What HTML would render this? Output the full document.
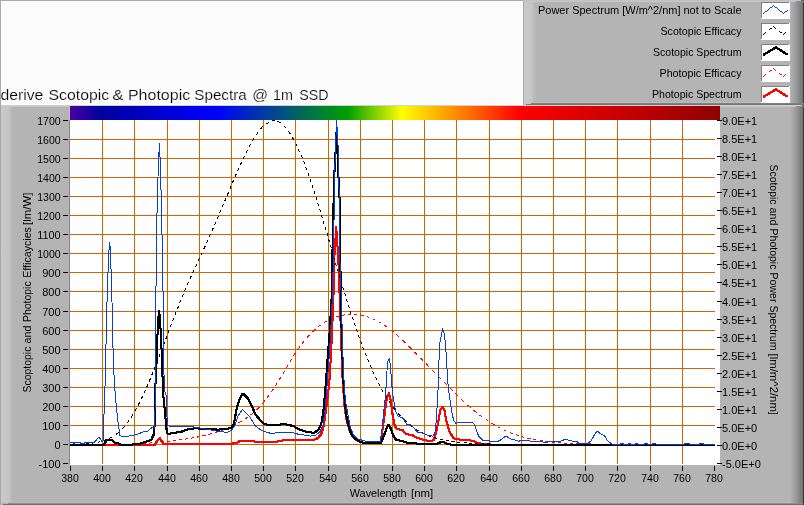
<!DOCTYPE html>
<html><head><meta charset="utf-8"><title>derive Scotopic &amp; Photopic Spectra</title>
<style>html,body{margin:0;padding:0;background:#fbfbfb;overflow:hidden}svg{display:block;font-family:"Liberation Sans", sans-serif;font-size:11px;fill:#000}svg{will-change:transform;opacity:0.999}.g line{stroke:#cc6600;stroke-width:1}.t line{stroke:#000;stroke-width:1}</style></head><body>
<svg width="804" height="505" viewBox="0 0 804 505">
<defs>
<linearGradient id="spec" x1="0" x2="1" y1="0" y2="0">
<stop offset="0.0000" stop-color="#4a00a0"/>
<stop offset="0.0492" stop-color="#0000a0"/>
<stop offset="0.2246" stop-color="#0000ff"/>
<stop offset="0.4277" stop-color="#00a000"/>
<stop offset="0.5108" stop-color="#ffff00"/>
<stop offset="0.6923" stop-color="#ff0000"/>
<stop offset="1.0000" stop-color="#900000"/>
</linearGradient>
<linearGradient id="lh" x1="0" x2="1"><stop offset="0" stop-color="#c9c9c9"/><stop offset="0.6" stop-color="#c6c6c6"/><stop offset="1" stop-color="#b4b4b4"/></linearGradient>
<linearGradient id="rs" x1="0" x2="1"><stop offset="0" stop-color="#b4b4b4"/><stop offset="0.45" stop-color="#989898"/><stop offset="0.9" stop-color="#747474"/><stop offset="0.93" stop-color="#3c3c3c"/><stop offset="1" stop-color="#343434"/></linearGradient>
<clipPath id="cp"><rect x="70" y="120" width="645" height="345"/></clipPath>
</defs>
<rect x="0" y="0" width="804" height="105" fill="#fbfbfb"/>
<rect x="0" y="0" width="524" height="1" fill="#aaaaaa"/>
<rect x="0" y="0" width="1" height="105" fill="#aaaaaa"/>
<rect x="523" y="0" width="281" height="105" fill="#b4b4b4"/>
<rect x="523" y="0" width="1" height="105" fill="#aaaaaa"/>
<rect x="524" y="0" width="12" height="105" fill="url(#lh)"/>
<rect x="523" y="0" width="278" height="1" fill="#c2c2c2"/>
<rect x="524" y="1" width="272" height="1" fill="#c6c6c6"/>
<rect x="790" y="2" width="14" height="103" fill="url(#rs)"/>
<rect x="796" y="1" width="8" height="1" fill="#8c8c8c"/><rect x="801" y="0" width="3" height="1" fill="#5a5a5a"/>
<rect x="531" y="102" width="260" height="1" fill="#bcbcbc"/>
<rect x="531" y="103" width="273" height="1" fill="#808080"/>
<rect x="526" y="104" width="278" height="1" fill="#747474"/>
<rect x="0" y="105" width="804" height="400" fill="#b4b4b4"/>
<rect x="0" y="105" width="1" height="400" fill="#a8a8a8"/>
<rect x="1" y="105" width="12" height="398" fill="url(#lh)"/>
<rect x="1" y="105" width="800" height="1" fill="#cdd3d3"/>
<rect x="2" y="106" width="794" height="1" fill="#c4c4c4"/>
<rect x="790" y="107" width="14" height="398" fill="url(#rs)"/>
<rect x="796" y="106" width="8" height="1" fill="#8c8c8c"/><rect x="802" y="105" width="2" height="1" fill="#5a5a5a"/>
<rect x="8" y="502" width="782" height="1" fill="#bababa"/>
<rect x="8" y="503" width="795" height="1" fill="#8e8e8e"/>
<rect x="3" y="504" width="800" height="1" fill="#707070"/>
<rect x="69" y="106" width="1" height="14" fill="#c2c2c2"/>
<rect x="69" y="120" width="1" height="344" fill="#858585"/>
<rect x="70" y="120" width="650" height="345" fill="#ffffff"/>
<rect x="70" y="106" width="650" height="14" fill="url(#spec)"/>
<g class="g" shape-rendering="crispEdges">
<line x1="102.5" y1="120" x2="102.5" y2="464"/>
<line x1="134.5" y1="120" x2="134.5" y2="464"/>
<line x1="167.5" y1="120" x2="167.5" y2="464"/>
<line x1="199.5" y1="120" x2="199.5" y2="464"/>
<line x1="231.5" y1="120" x2="231.5" y2="464"/>
<line x1="263.5" y1="120" x2="263.5" y2="464"/>
<line x1="295.5" y1="120" x2="295.5" y2="464"/>
<line x1="328.5" y1="120" x2="328.5" y2="464"/>
<line x1="360.5" y1="120" x2="360.5" y2="464"/>
<line x1="392.5" y1="120" x2="392.5" y2="464"/>
<line x1="424.5" y1="120" x2="424.5" y2="464"/>
<line x1="456.5" y1="120" x2="456.5" y2="464"/>
<line x1="489.5" y1="120" x2="489.5" y2="464"/>
<line x1="521.5" y1="120" x2="521.5" y2="464"/>
<line x1="553.5" y1="120" x2="553.5" y2="464"/>
<line x1="585.5" y1="120" x2="585.5" y2="464"/>
<line x1="617.5" y1="120" x2="617.5" y2="464"/>
<line x1="650.5" y1="120" x2="650.5" y2="464"/>
<line x1="682.5" y1="120" x2="682.5" y2="464"/>
<line x1="70" y1="444.5" x2="715" y2="444.5"/>
<line x1="70" y1="425.5" x2="715" y2="425.5"/>
<line x1="70" y1="406.5" x2="715" y2="406.5"/>
<line x1="70" y1="387.5" x2="715" y2="387.5"/>
<line x1="70" y1="368.5" x2="715" y2="368.5"/>
<line x1="70" y1="349.5" x2="715" y2="349.5"/>
<line x1="70" y1="330.5" x2="715" y2="330.5"/>
<line x1="70" y1="311.5" x2="715" y2="311.5"/>
<line x1="70" y1="291.5" x2="715" y2="291.5"/>
<line x1="70" y1="272.5" x2="715" y2="272.5"/>
<line x1="70" y1="253.5" x2="715" y2="253.5"/>
<line x1="70" y1="234.5" x2="715" y2="234.5"/>
<line x1="70" y1="215.5" x2="715" y2="215.5"/>
<line x1="70" y1="196.5" x2="715" y2="196.5"/>
<line x1="70" y1="177.5" x2="715" y2="177.5"/>
<line x1="70" y1="158.5" x2="715" y2="158.5"/>
<line x1="70" y1="139.5" x2="715" y2="139.5"/>
</g>
<g clip-path="url(#cp)">
<g fill="none" stroke="#ff0000" stroke-width="1" shape-rendering="crispEdges">
<polyline id="k1" transform="translate(-0.5,-0.5)" points="70.0,445.0 154.6,445.0 157.0,441.0 159.6,438.1 161.5,441.0 163.5,444.0 166.0,444.0 231.7,444.0 233.0,443.5 237.3,442.5 239.8,441.0 253.2,441.0 256.0,442.0 275.3,442.0 285.0,440.0 313.5,440.0 317.7,438.2 321.2,434.0 323.9,425.7 326.3,407.7 328.1,393.9 329.5,380.0 331.2,350.5 333.4,300.0 334.3,258.0 336.2,227.0 338.4,260.0 339.3,290.0 340.1,300.0 340.5,320.0 341.5,350.0 342.6,380.0 344.7,407.7 346.8,421.6 349.5,430.0 353.0,437.0 358.0,441.0 366.0,443.5 380.7,442.0 384.2,417.4 387.0,396.6 388.9,393.9 390.5,399.4 392.6,414.6 394.7,425.7 396.8,429.2 402.3,429.9 405.8,434.0 412.7,435.4 418.2,438.2 425.2,440.2 430.0,441.2 433.5,440.2 436.2,432.6 438.3,421.6 440.4,409.8 442.5,407.0 444.3,409.8 446.6,421.6 449.4,431.2 452.9,437.5 455.6,439.3 463.9,439.8 472.3,440.7 477.8,443.0 482.0,444.0 490.0,444.5 520.0,445.0 714.5,445.0"/>
<use href="#k1" x="1" y="0"/><use href="#k1" x="0" y="1"/><use href="#k1" x="1" y="1"/>
</g>
<path fill="none" stroke="#ff0000" stroke-width="1" shape-rendering="crispEdges" d="M70.5 444.4L73.7 444.4M76.7 444.4L79.7 444.4M82.7 444.4L85.7 444.4M88.7 444.4L91.7 444.4M94.7 444.4L97.6 444.4M100.6 444.4L103.6 444.4M106.6 444.4L109.6 444.4M112.6 444.3L115.6 444.3M118.6 444.3L121.6 444.2M124.5 444.2L127.5 444.1M130.5 444.0L133.5 444.0M136.5 443.8L139.5 443.7M142.7 443.5L145.7 443.3M148.7 443.1L151.7 442.9M154.7 442.6L157.7 442.4M160.7 442.1L163.7 441.8M166.6 441.5L169.6 441.2M172.6 440.8L175.6 440.5M178.6 440.1L181.6 439.7M184.6 439.3L187.6 438.8M190.6 438.3L193.6 437.7M196.5 437.2L199.5 436.6M202.5 435.9L205.5 435.2M208.5 434.5L211.7 433.6M214.7 432.8L217.7 431.8M220.7 430.7L223.7 429.7M226.7 428.4L229.7 427.1M232.7 425.8L235.6 424.3M238.6 422.8L241.6 421.1M244.6 419.2L247.6 417.4M250.6 414.9L253.6 412.5M256.6 409.8L259.6 406.7M262.3 403.8L265.0 400.7M267.1 397.8L269.2 394.8M271.4 391.9L273.4 388.9M275.5 385.7L277.4 382.7M279.3 379.7L281.1 376.7M282.9 373.7L284.6 370.7M286.4 367.8L288.1 364.8M289.9 361.9L291.8 358.8M293.6 355.9L295.5 352.7M297.5 349.8L299.8 346.7M302.0 343.8L304.4 340.7M307.0 337.8L309.6 334.9M312.5 331.8L315.5 329.3M318.4 326.7L321.4 324.5M324.4 322.6L327.4 320.7M330.4 319.3L333.4 318.0M336.4 316.8L339.4 316.1M342.4 315.3L345.4 314.8M348.3 314.6L351.3 314.3M354.3 314.4L357.3 314.7M360.3 314.9L363.5 315.8M366.5 316.6L369.5 317.5M372.5 318.8L375.5 320.1M378.5 321.7L381.5 323.5M384.5 325.3L387.4 327.5M390.4 329.7L393.4 332.0M396.4 334.6L399.4 337.2M402.4 339.9L405.4 342.8M408.4 345.7L411.4 348.7M414.4 351.7L417.3 354.7M420.3 357.8L423.1 360.6M426.1 363.7L428.8 366.6M431.8 369.7L434.8 372.8M437.6 375.6L440.6 378.7M443.6 381.7L446.6 384.7M449.5 387.7L452.5 390.6M455.5 393.5L458.5 396.4M461.5 399.3L464.5 402.2M467.5 404.9L470.5 407.6M473.5 410.3L476.5 412.6M479.4 414.9L482.4 417.1M485.7 419.3L488.6 421.3M491.6 423.2L494.6 424.9M497.6 426.7L500.6 428.2M503.6 429.7L506.6 431.1M509.6 432.3L512.6 433.5M515.6 434.6L518.5 435.6M521.5 436.6L524.5 437.4M527.5 438.1L530.5 438.9M533.5 439.5L536.5 440.1M539.5 440.6L542.5 441.0M545.5 441.4L548.4 441.7M551.4 442.0L554.6 442.3M557.6 442.6L560.6 442.8M563.6 443.0L566.6 443.2M569.6 443.4L572.6 443.5M575.6 443.6L578.6 443.7M581.6 443.8L584.6 443.9M587.5 443.9L590.5 444.0M593.5 444.1L596.5 444.1M599.5 444.1L602.5 444.2M605.5 444.2L608.5 444.2M611.5 444.3L614.5 444.3M617.4 444.3L620.4 444.3M623.6 444.3L626.6 444.3M629.6 444.4L632.6 444.4M635.6 444.4L638.6 444.4M641.6 444.4L644.6 444.4M647.6 444.4L650.6 444.4M653.6 444.4L656.5 444.4M659.5 444.4L662.5 444.4M665.5 444.4L668.5 444.4M671.5 444.4L674.5 444.4M677.5 444.4L680.5 444.4M683.5 444.4L686.4 444.4M689.4 444.4L692.7 444.4M695.6 444.4L698.6 444.4M701.6 444.4L704.6 444.4M707.6 444.4L710.6 444.4M713.6 444.4L714.5 444.4"/>
<g fill="none" stroke="#000000" stroke-width="1" shape-rendering="crispEdges">
<polyline id="k2" transform="translate(-0.5,-0.5)" points="70.0,445.0 103.8,445.0 107.0,439.6 111.4,439.6 114.2,442.4 117.4,442.9 120.5,444.8 124.0,445.0 132.0,444.6 140.0,443.7 151.2,439.8 154.0,434.0 155.0,420.0 155.2,390.0 156.4,367.0 157.8,326.0 159.0,310.5 160.0,318.0 160.8,334.5 161.4,345.0 163.0,390.0 163.5,397.0 166.9,433.0 168.0,434.0 182.6,431.4 185.9,429.7 193.8,428.4 202.7,428.6 208.9,428.8 217.2,429.6 226.2,429.2 231.3,427.8 233.8,424.0 237.2,406.3 239.6,399.4 242.1,393.9 243.5,394.2 247.6,398.0 250.4,402.9 255.2,413.9 260.1,420.2 264.3,424.0 269.8,425.4 275.3,425.4 283.0,424.0 289.2,425.0 294.0,426.4 298.3,429.2 308.0,432.4 314.2,432.6 318.4,429.9 321.2,424.3 323.2,413.2 324.6,398.0 325.9,382.0 327.8,355.6 329.5,333.7 331.5,300.0 332.1,270.0 332.5,250.0 333.2,215.0 333.9,190.0 334.4,173.0 335.2,160.0 336.3,133.0 337.9,160.0 338.5,177.0 340.2,212.0 340.4,240.0 340.4,258.0 340.8,305.0 341.3,320.0 342.1,347.0 343.3,380.0 344.7,400.8 346.1,414.6 348.2,424.3 350.9,433.3 355.1,438.9 360.6,442.0 366.2,443.4 380.7,443.4 383.5,436.8 387.0,427.1 388.6,425.0 390.4,427.8 393.2,435.4 396.0,439.6 401.6,441.0 407.2,442.6 415.5,443.4 426.5,444.4 434.9,444.4 439.0,443.0 441.8,441.6 444.6,442.6 447.3,444.0 451.5,444.6 470.0,445.0 714.5,445.0"/>
<use href="#k2" x="1" y="0"/><use href="#k2" x="0" y="1"/><use href="#k2" x="1" y="1"/>
</g>
<path fill="none" stroke="#000000" stroke-width="1" shape-rendering="crispEdges" d="M69.5 444.2L70.7 444.2M73.6 444.2L76.6 444.1M79.6 444.0L82.6 443.9M85.6 443.7L88.6 443.4M91.6 443.2L94.6 442.8M97.6 442.2L100.5 441.7M103.5 440.7L106.5 439.6M109.5 438.5L112.5 436.6M115.7 434.5L118.5 432.4M121.5 429.4L124.5 426.3M127.0 423.2L128.9 420.4M131.0 417.4L133.1 414.3M134.9 411.3L136.5 408.2M138.0 405.4L139.6 402.4M141.2 399.3L142.7 396.2M144.0 393.3L145.3 390.4M146.7 387.2L148.0 384.3M149.2 381.4L150.6 378.3M151.7 375.4L152.9 372.3M154.1 369.4L155.3 366.3M156.4 363.4L157.7 360.3M158.9 357.3L159.9 354.4M161.1 351.3L162.3 348.3M163.3 345.4L164.5 342.4M165.7 339.3L166.8 336.4M167.9 333.4L169.0 330.4M170.3 327.2L171.4 324.2M172.5 321.3L173.7 318.3M174.8 315.4L176.0 312.3M177.3 309.3L178.4 306.4M179.6 303.4L180.9 300.3M182.1 297.2L183.3 294.4M184.6 291.4L185.9 288.3M187.2 285.3L188.4 282.4M189.7 279.4L191.2 276.2M192.6 273.2L193.9 270.2M195.3 267.2L196.7 264.2M198.1 261.2L199.4 258.3M200.8 255.3L202.2 252.4M203.6 249.4L205.1 246.2M206.5 243.3L207.7 240.4M209.1 237.2L210.4 234.3M211.7 231.4L213.1 228.3M214.4 225.4L215.7 222.3M217.0 219.3L218.3 216.2M219.5 213.4L220.8 210.4M222.1 207.3L223.4 204.4M224.7 201.3L226.0 198.2M227.2 195.4L228.5 192.3M229.7 189.4L231.0 186.3M232.3 183.2L233.5 180.4M234.8 177.4L236.1 174.3M237.4 171.3L238.7 168.4M240.2 165.2L241.5 162.3M242.9 159.4L244.3 156.4M245.8 153.2L247.3 150.3M248.9 147.4L250.6 144.2M252.2 141.3L253.8 138.4M255.9 135.3L258.0 132.4M260.4 129.3L262.7 126.2M265.7 124.3L268.7 122.4M271.7 120.9L274.7 120.5M277.7 121.1L280.6 123.0M283.6 125.7L286.6 128.3M288.6 131.3L290.4 134.2M292.3 137.2L294.2 140.3M295.8 143.4L297.0 146.2M298.4 149.3L299.7 152.2M301.1 155.2L302.5 158.3M303.7 161.3L304.7 164.3M305.8 167.2L306.9 170.2M308.0 173.2L309.0 176.2M310.1 179.2L311.2 182.4M312.2 185.3L313.1 188.1M314.1 191.3L315.0 194.2M316.0 197.3L316.9 200.2M317.9 203.3L318.8 206.2M319.8 209.4L320.7 212.3M321.5 215.2L322.4 218.2M323.4 221.3L324.2 224.3M325.1 227.2L326.0 230.1M327.0 233.3L327.8 236.2M328.6 239.1L329.6 242.3M330.4 245.2L331.3 248.4M332.1 251.3L333.0 254.2M333.9 257.3L334.7 260.2M335.6 263.2L336.5 266.3M337.4 269.3L338.3 272.2M339.2 275.4L340.1 278.3M341.0 281.2L341.9 284.2M342.8 287.4L343.7 290.3M344.7 293.2L345.7 296.4M346.6 299.3L347.5 302.2M348.4 305.2L349.4 308.3M350.3 311.3L351.2 314.2M352.3 317.2L353.3 320.2M354.3 323.2L355.3 326.2M356.3 329.2L357.4 332.2M358.4 335.2L359.4 338.1M360.6 341.4L361.8 344.3M362.9 347.3L364.0 350.3M365.2 353.2L366.3 356.2M367.5 359.2L368.9 362.3M370.1 365.3L371.4 368.2M372.8 371.3L374.1 374.3M375.4 377.2L377.0 380.2M378.6 383.3L380.1 386.1M381.7 389.2L383.3 392.3M385.2 395.3L387.1 398.3M389.0 401.3L390.9 404.2M393.1 407.2L395.6 410.4M397.9 413.3L400.5 416.2M403.5 419.1L406.4 422.1M409.4 424.6L412.4 426.8M415.4 429.1L418.4 430.8M421.4 432.4L424.4 434.0M427.4 435.2L430.6 436.5M433.6 437.5L436.6 438.3M439.6 439.2L442.6 439.8M445.6 440.4L448.5 441.0M451.5 441.4L454.5 441.9M457.5 442.2L460.5 442.5M463.5 442.8L466.5 443.0M469.5 443.2L472.5 443.4M475.5 443.5L478.4 443.6M481.4 443.8L484.4 443.8M487.4 443.9L490.4 444.0M493.4 444.1L496.4 444.1M499.6 444.2L502.6 444.2M505.6 444.2L508.6 444.3M511.6 444.3L514.6 444.3M517.5 444.3L520.5 444.3M523.5 444.4L526.5 444.4M529.5 444.4L532.5 444.4M535.5 444.4L538.5 444.4M541.5 444.4L544.5 444.4M547.4 444.4L550.4 444.4M553.4 444.4L556.4 444.4M559.4 444.4L562.4 444.4M565.4 444.4L568.6 444.4M571.6 444.4L574.6 444.4M577.6 444.4L580.6 444.4M583.6 444.4L586.5 444.4M589.5 444.4L592.5 444.4M595.5 444.4L598.5 444.4M601.5 444.4L604.5 444.4M607.5 444.4L610.5 444.4M613.5 444.4L616.4 444.4M619.4 444.4L622.4 444.4M625.4 444.4L628.4 444.4M631.4 444.4L634.4 444.4M637.6 444.4L640.6 444.4M643.6 444.4L646.6 444.4M649.6 444.4L652.6 444.4M655.5 444.4L658.5 444.4M661.5 444.4L664.5 444.4M667.5 444.4L670.5 444.4M673.5 444.4L676.5 444.4M679.5 444.4L682.5 444.4M685.4 444.4L688.4 444.4M691.4 444.4L694.4 444.4M697.4 444.4L700.4 444.4M703.4 444.4L706.6 444.4M709.6 444.4L712.6 444.4"/>
<polyline fill="none" stroke="#0040dc" stroke-width="1" shape-rendering="crispEdges" points="70.0,442.5 73.0,442.5 73.0,443.5 74.5,443.5 74.5,442.5 80.0,442.5 80.0,443.5 84.0,443.5 84.0,442.5 94.3,442.5 99.0,437.0 101.8,441.3 103.4,441.0 103.6,425.0 104.8,394.0 105.7,360.0 106.5,320.0 107.5,285.0 108.8,253.0 109.6,242.0 110.4,250.0 111.2,275.0 112.0,302.0 112.9,345.0 114.2,380.0 115.8,400.8 117.9,421.6 120.0,435.4 123.4,437.0 135.9,434.7 145.6,431.2 148.0,431.0 152.5,427.0 154.2,427.0 155.0,410.0 155.4,390.0 155.5,289.0 156.5,283.0 156.6,230.0 157.6,188.0 158.7,158.0 159.5,143.0 160.1,159.0 161.2,196.0 162.2,243.0 162.6,280.0 163.6,308.0 164.1,390.0 166.0,395.0 167.4,425.2 168.5,426.0 190.4,426.4 202.7,428.4 215.8,431.0 227.5,432.4 231.7,429.9 234.5,426.4 237.9,416.0 242.5,409.4 249.7,416.7 254.6,425.0 258.0,428.2 263.6,431.2 270.5,433.3 274.6,433.3 276.7,432.4 292.0,432.4 297.5,434.0 310.8,436.1 315.6,435.4 319.8,432.0 323.2,424.3 325.3,407.7 326.7,391.0 327.4,380.0 329.3,355.0 331.3,320.0 332.6,290.0 333.4,255.0 334.1,215.0 334.7,177.0 335.3,150.0 336.2,131.0 336.6,119.0 337.2,131.0 338.3,150.0 338.9,177.0 339.3,215.0 339.7,255.0 341.4,300.0 342.6,347.0 344.0,380.0 345.4,400.8 348.2,416.0 350.2,427.1 353.7,435.4 357.9,438.9 364.8,441.0 373.1,441.9 380.0,441.6 381.4,435.4 382.8,421.6 384.2,407.7 385.6,393.9 386.5,380.0 387.5,361.5 389.3,359.2 390.2,364.3 392.3,390.0 393.3,398.0 395.4,410.5 398.2,416.7 402.3,417.4 406.5,424.0 411.3,425.0 417.5,432.0 423.8,433.3 427.9,435.4 432.8,436.1 434.9,432.6 436.2,421.6 437.6,398.0 438.3,385.0 439.0,360.2 440.1,340.8 442.6,329.4 444.3,333.9 445.6,344.9 447.0,368.5 448.4,390.0 449.0,392.5 451.5,410.5 453.6,420.2 455.6,423.2 464.6,422.2 467.4,422.9 472.3,422.2 474.3,424.3 477.1,432.6 479.2,436.8 482.6,440.2 488.2,440.4 490.3,441.3 497.8,441.3 500.5,440.0 504.6,436.9 507.4,436.9 511.5,439.4 517.0,440.4 519.0,441.3 521.0,440.1 527.9,440.1 530.0,441.0 540.2,441.0 543.0,442.1 547.7,442.1 549.1,441.0 553.9,441.0 555.9,442.1 558.0,441.0 561.4,441.0 564.8,439.4 566.9,439.4 568.9,440.4 571.7,441.0 576.4,441.0 579.1,443.5 588.0,443.5 591.4,440.4 595.5,432.8 597.6,431.2 601.0,434.2 604.4,435.6 607.8,441.0 611.3,443.5 613.0,444.5 620.0,444.5 620.5,443.5 623.6,443.5 624.0,444.5 628.4,444.5 628.6,443.5 630.0,443.5 630.4,444.5 635.0,444.5 635.3,443.5 637.8,443.5 638.2,444.5 644.0,444.5 644.3,443.5 647.6,443.5 648.0,444.5 652.3,444.5 652.6,443.5 655.8,443.5 656.2,444.5 684.3,444.5 684.6,443.5 689.7,443.5 690.0,444.5 699.1,444.5 699.4,443.5 703.6,443.5 704.0,444.5 714.5,444.5"/>
</g>
<g class="t" shape-rendering="crispEdges">
<line x1="63" y1="463.5" x2="68" y2="463.5"/>
<line x1="63" y1="444.5" x2="68" y2="444.5"/>
<line x1="63" y1="425.5" x2="68" y2="425.5"/>
<line x1="63" y1="406.5" x2="68" y2="406.5"/>
<line x1="63" y1="387.5" x2="68" y2="387.5"/>
<line x1="63" y1="368.5" x2="68" y2="368.5"/>
<line x1="63" y1="349.5" x2="68" y2="349.5"/>
<line x1="63" y1="330.5" x2="68" y2="330.5"/>
<line x1="63" y1="311.5" x2="68" y2="311.5"/>
<line x1="63" y1="291.5" x2="68" y2="291.5"/>
<line x1="63" y1="272.5" x2="68" y2="272.5"/>
<line x1="63" y1="253.5" x2="68" y2="253.5"/>
<line x1="63" y1="234.5" x2="68" y2="234.5"/>
<line x1="63" y1="215.5" x2="68" y2="215.5"/>
<line x1="63" y1="196.5" x2="68" y2="196.5"/>
<line x1="63" y1="177.5" x2="68" y2="177.5"/>
<line x1="63" y1="158.5" x2="68" y2="158.5"/>
<line x1="63" y1="139.5" x2="68" y2="139.5"/>
<line x1="63" y1="120.5" x2="68" y2="120.5"/>
<line x1="717" y1="463.5" x2="722" y2="463.5"/>
<line x1="717" y1="445.5" x2="722" y2="445.5"/>
<line x1="717" y1="427.5" x2="722" y2="427.5"/>
<line x1="717" y1="409.5" x2="722" y2="409.5"/>
<line x1="717" y1="391.5" x2="722" y2="391.5"/>
<line x1="717" y1="373.5" x2="722" y2="373.5"/>
<line x1="717" y1="355.5" x2="722" y2="355.5"/>
<line x1="717" y1="337.5" x2="722" y2="337.5"/>
<line x1="717" y1="319.5" x2="722" y2="319.5"/>
<line x1="717" y1="301.5" x2="722" y2="301.5"/>
<line x1="717" y1="282.5" x2="722" y2="282.5"/>
<line x1="717" y1="264.5" x2="722" y2="264.5"/>
<line x1="717" y1="246.5" x2="722" y2="246.5"/>
<line x1="717" y1="228.5" x2="722" y2="228.5"/>
<line x1="717" y1="210.5" x2="722" y2="210.5"/>
<line x1="717" y1="192.5" x2="722" y2="192.5"/>
<line x1="717" y1="174.5" x2="722" y2="174.5"/>
<line x1="717" y1="156.5" x2="722" y2="156.5"/>
<line x1="717" y1="138.5" x2="722" y2="138.5"/>
<line x1="717" y1="120.5" x2="722" y2="120.5"/>
<line x1="70.5" y1="466" x2="70.5" y2="471"/>
<line x1="102.5" y1="466" x2="102.5" y2="471"/>
<line x1="134.5" y1="466" x2="134.5" y2="471"/>
<line x1="167.5" y1="466" x2="167.5" y2="471"/>
<line x1="199.5" y1="466" x2="199.5" y2="471"/>
<line x1="231.5" y1="466" x2="231.5" y2="471"/>
<line x1="263.5" y1="466" x2="263.5" y2="471"/>
<line x1="295.5" y1="466" x2="295.5" y2="471"/>
<line x1="328.5" y1="466" x2="328.5" y2="471"/>
<line x1="360.5" y1="466" x2="360.5" y2="471"/>
<line x1="392.5" y1="466" x2="392.5" y2="471"/>
<line x1="424.5" y1="466" x2="424.5" y2="471"/>
<line x1="456.5" y1="466" x2="456.5" y2="471"/>
<line x1="489.5" y1="466" x2="489.5" y2="471"/>
<line x1="521.5" y1="466" x2="521.5" y2="471"/>
<line x1="553.5" y1="466" x2="553.5" y2="471"/>
<line x1="585.5" y1="466" x2="585.5" y2="471"/>
<line x1="617.5" y1="466" x2="617.5" y2="471"/>
<line x1="650.5" y1="466" x2="650.5" y2="471"/>
<line x1="682.5" y1="466" x2="682.5" y2="471"/>
<line x1="714.5" y1="466" x2="714.5" y2="471"/>
</g>
<g>
<text x="60.6" y="468.0" text-anchor="end">-100</text>
<text x="60.6" y="449.0" text-anchor="end">0</text>
<text x="60.6" y="430.0" text-anchor="end">100</text>
<text x="60.6" y="411.0" text-anchor="end">200</text>
<text x="60.6" y="392.0" text-anchor="end">300</text>
<text x="60.6" y="373.0" text-anchor="end">400</text>
<text x="60.6" y="354.0" text-anchor="end">500</text>
<text x="60.6" y="335.0" text-anchor="end">600</text>
<text x="60.6" y="316.0" text-anchor="end">700</text>
<text x="60.6" y="296.0" text-anchor="end">800</text>
<text x="60.6" y="277.0" text-anchor="end">900</text>
<text x="60.6" y="258.0" text-anchor="end" textLength="23.4" lengthAdjust="spacingAndGlyphs">1000</text>
<text x="60.6" y="239.0" text-anchor="end" textLength="23.4" lengthAdjust="spacingAndGlyphs">1100</text>
<text x="60.6" y="220.0" text-anchor="end" textLength="23.4" lengthAdjust="spacingAndGlyphs">1200</text>
<text x="60.6" y="201.0" text-anchor="end" textLength="23.4" lengthAdjust="spacingAndGlyphs">1300</text>
<text x="60.6" y="182.0" text-anchor="end" textLength="23.4" lengthAdjust="spacingAndGlyphs">1400</text>
<text x="60.6" y="163.0" text-anchor="end" textLength="23.4" lengthAdjust="spacingAndGlyphs">1500</text>
<text x="60.6" y="144.0" text-anchor="end" textLength="23.4" lengthAdjust="spacingAndGlyphs">1600</text>
<text x="60.6" y="125.0" text-anchor="end" textLength="23.4" lengthAdjust="spacingAndGlyphs">1700</text>
<text x="722" y="468.0">-5.0E+0</text>
<text x="722" y="450.0">0.0E+0</text>
<text x="722" y="432.0">5.0E+0</text>
<text x="722" y="414.0">1.0E+1</text>
<text x="722" y="396.0">1.5E+1</text>
<text x="722" y="378.0">2.0E+1</text>
<text x="722" y="360.0">2.5E+1</text>
<text x="722" y="342.0">3.0E+1</text>
<text x="722" y="324.0">3.5E+1</text>
<text x="722" y="306.0">4.0E+1</text>
<text x="722" y="287.0">4.5E+1</text>
<text x="722" y="269.0">5.0E+1</text>
<text x="722" y="251.0">5.5E+1</text>
<text x="722" y="233.0">6.0E+1</text>
<text x="722" y="215.0">6.5E+1</text>
<text x="722" y="197.0">7.0E+1</text>
<text x="722" y="179.0">7.5E+1</text>
<text x="722" y="161.0">8.0E+1</text>
<text x="722" y="143.0">8.5E+1</text>
<text x="722" y="125.0">9.0E+1</text>
<text x="70.0" y="482" text-anchor="middle" textLength="17.6" lengthAdjust="spacingAndGlyphs">380</text>
<text x="102.0" y="482" text-anchor="middle" textLength="17.6" lengthAdjust="spacingAndGlyphs">400</text>
<text x="134.0" y="482" text-anchor="middle" textLength="17.6" lengthAdjust="spacingAndGlyphs">420</text>
<text x="167.0" y="482" text-anchor="middle" textLength="17.6" lengthAdjust="spacingAndGlyphs">440</text>
<text x="199.0" y="482" text-anchor="middle" textLength="17.6" lengthAdjust="spacingAndGlyphs">460</text>
<text x="231.0" y="482" text-anchor="middle" textLength="17.6" lengthAdjust="spacingAndGlyphs">480</text>
<text x="263.0" y="482" text-anchor="middle" textLength="17.6" lengthAdjust="spacingAndGlyphs">500</text>
<text x="295.0" y="482" text-anchor="middle" textLength="17.6" lengthAdjust="spacingAndGlyphs">520</text>
<text x="328.0" y="482" text-anchor="middle" textLength="17.6" lengthAdjust="spacingAndGlyphs">540</text>
<text x="360.0" y="482" text-anchor="middle" textLength="17.6" lengthAdjust="spacingAndGlyphs">560</text>
<text x="392.0" y="482" text-anchor="middle" textLength="17.6" lengthAdjust="spacingAndGlyphs">580</text>
<text x="424.0" y="482" text-anchor="middle" textLength="17.6" lengthAdjust="spacingAndGlyphs">600</text>
<text x="456.0" y="482" text-anchor="middle" textLength="17.6" lengthAdjust="spacingAndGlyphs">620</text>
<text x="489.0" y="482" text-anchor="middle" textLength="17.6" lengthAdjust="spacingAndGlyphs">640</text>
<text x="521.0" y="482" text-anchor="middle" textLength="17.6" lengthAdjust="spacingAndGlyphs">660</text>
<text x="553.0" y="482" text-anchor="middle" textLength="17.6" lengthAdjust="spacingAndGlyphs">680</text>
<text x="585.0" y="482" text-anchor="middle" textLength="17.6" lengthAdjust="spacingAndGlyphs">700</text>
<text x="617.0" y="482" text-anchor="middle" textLength="17.6" lengthAdjust="spacingAndGlyphs">720</text>
<text x="650.0" y="482" text-anchor="middle" textLength="17.6" lengthAdjust="spacingAndGlyphs">740</text>
<text x="682.0" y="482" text-anchor="middle" textLength="17.6" lengthAdjust="spacingAndGlyphs">760</text>
<text x="714.0" y="482" text-anchor="middle" textLength="17.6" lengthAdjust="spacingAndGlyphs">780</text>
</g>
<text x="349.8" y="496.5" textLength="56.8" lengthAdjust="spacingAndGlyphs">Wavelength</text>
<text x="411.0" y="496.5" textLength="22.2" lengthAdjust="spacingAndGlyphs">[nm]</text>
<text transform="translate(31,392.4) rotate(-90)" textLength="45.8" lengthAdjust="spacingAndGlyphs">Scoptopic</text>
<text transform="translate(31,343.4) rotate(-90)" textLength="17.8" lengthAdjust="spacingAndGlyphs">and</text>
<text transform="translate(31,322.0) rotate(-90)" textLength="40.6" lengthAdjust="spacingAndGlyphs">Photopic</text>
<text transform="translate(31,277.8) rotate(-90)" textLength="50.7" lengthAdjust="spacingAndGlyphs">Efficaycies</text>
<text transform="translate(31,224.9) rotate(-90)" textLength="32.3" lengthAdjust="spacingAndGlyphs">[lm/W]</text>
<text transform="translate(770,164.6) rotate(90)" textLength="39.8" lengthAdjust="spacingAndGlyphs">Scotopic</text>
<text transform="translate(770,207.6) rotate(90)" textLength="17.8" lengthAdjust="spacingAndGlyphs">and</text>
<text transform="translate(770,228.6) rotate(90)" textLength="40.8" lengthAdjust="spacingAndGlyphs">Photopic</text>
<text transform="translate(770,272.6) rotate(90)" textLength="29.8" lengthAdjust="spacingAndGlyphs">Power</text>
<text transform="translate(770,305.4) rotate(90)" textLength="45.0" lengthAdjust="spacingAndGlyphs">Spectrum</text>
<text transform="translate(770,353.6) rotate(90)" textLength="61.4" lengthAdjust="spacingAndGlyphs">[lm/m^2/nm]</text>
<g font-size="15.5px" stroke="#fbfbfb" stroke-width="0.2" paint-order="fill stroke">
<text x="0.4" y="99.5" textLength="43.0" lengthAdjust="spacingAndGlyphs">derive</text>
<text x="48.5" y="99.5" textLength="60.7" lengthAdjust="spacingAndGlyphs">Scotopic</text>
<text x="112.2" y="99.5" textLength="11.3" lengthAdjust="spacingAndGlyphs">&amp;</text>
<text x="127.9" y="99.5" textLength="62.4" lengthAdjust="spacingAndGlyphs">Photopic</text>
<text x="194.3" y="99.5" textLength="52.4" lengthAdjust="spacingAndGlyphs">Spectra</text>
<text x="252.2" y="99.5" textLength="15.8" lengthAdjust="spacingAndGlyphs">@</text>
<text x="273.1" y="99.5" textLength="20.0" lengthAdjust="spacingAndGlyphs">1m</text>
<text x="299.2" y="99.5" textLength="29.4" lengthAdjust="spacingAndGlyphs">SSD</text>
</g>
<text x="741.5" y="14" text-anchor="end" textLength="203.5" lengthAdjust="spacingAndGlyphs">Power Spectrum [W/m^2/nm] not to Scale</text>
<rect x="761" y="2" width="29" height="17" fill="#ffffff"/>
<rect x="761" y="2" width="1" height="16" fill="#808080"/>
<rect x="761" y="2" width="28" height="1" fill="#808080"/>
<path fill="#0040dc" shape-rendering="crispEdges" d="M763 13h1v1h-1zM764 12h1v1h-1zM765 11h1v1h-1zM766 11h1v1h-1zM767 10h1v1h-1zM768 9h1v1h-1zM769 8h1v1h-1zM770 7h1v1h-1zM771 7h1v1h-1zM772 6h1v1h-1zM773 5h1v1h-1zM774 6h1v1h-1zM775 7h1v1h-1zM776 7h1v1h-1zM777 8h1v1h-1zM778 9h1v1h-1zM779 10h1v1h-1zM780 11h1v1h-1zM781 11h1v1h-1zM782 12h1v1h-1zM783 13h1v1h-1zM784 12h1v1h-1zM785 11h1v1h-1zM786 11h1v1h-1zM787 10h1v1h-1z"/>
<text x="741.5" y="35" text-anchor="end" textLength="81" lengthAdjust="spacingAndGlyphs">Scotopic Efficacy</text>
<rect x="761" y="23" width="29" height="17" fill="#ffffff"/>
<rect x="761" y="23" width="1" height="16" fill="#808080"/>
<rect x="761" y="23" width="28" height="1" fill="#808080"/>
<path fill="#000000" shape-rendering="crispEdges" d="M763 34h1v1h-1zM764 33h1v1h-1zM765 32h1v1h-1zM769 29h1v1h-1zM770 28h1v1h-1zM771 28h1v1h-1zM773 26h1v1h-1zM774 27h1v1h-1zM775 28h1v1h-1zM779 31h1v1h-1zM780 32h1v1h-1zM781 32h1v1h-1zM783 34h1v1h-1zM784 33h1v1h-1zM785 32h1v1h-1z"/>
<text x="741.5" y="56" text-anchor="end" textLength="88.5" lengthAdjust="spacingAndGlyphs">Scotopic Spectrum</text>
<rect x="761" y="44" width="29" height="17" fill="#ffffff"/>
<rect x="761" y="44" width="1" height="16" fill="#808080"/>
<rect x="761" y="44" width="28" height="1" fill="#808080"/>
<g fill="none" stroke="#000" stroke-width="1" shape-rendering="crispEdges">
<polyline id="k3" transform="translate(-0.5,-0.5)" points="763.2,55.0 776.0,47.4 788.0,55.0"/>
<use href="#k3" x="1" y="0"/><use href="#k3" x="0" y="1"/><use href="#k3" x="1" y="1"/>
</g>
<text x="741.5" y="77" text-anchor="end" textLength="82" lengthAdjust="spacingAndGlyphs">Photopic Efficacy</text>
<rect x="761" y="65" width="29" height="17" fill="#ffffff"/>
<rect x="761" y="65" width="1" height="16" fill="#808080"/>
<rect x="761" y="65" width="28" height="1" fill="#808080"/>
<path fill="#ff0000" shape-rendering="crispEdges" d="M763 76h1v1h-1zM764 75h1v1h-1zM765 74h1v1h-1zM769 71h1v1h-1zM770 70h1v1h-1zM771 70h1v1h-1zM773 68h1v1h-1zM774 69h1v1h-1zM775 70h1v1h-1zM779 73h1v1h-1zM780 74h1v1h-1zM781 74h1v1h-1zM783 76h1v1h-1zM784 75h1v1h-1zM785 74h1v1h-1z"/>
<text x="741.5" y="98" text-anchor="end" textLength="89.5" lengthAdjust="spacingAndGlyphs">Photopic Spectrum</text>
<rect x="761" y="86" width="29" height="17" fill="#ffffff"/>
<rect x="761" y="86" width="1" height="16" fill="#808080"/>
<rect x="761" y="86" width="28" height="1" fill="#808080"/>
<g fill="none" stroke="#ff0000" stroke-width="1" shape-rendering="crispEdges">
<polyline id="k4" transform="translate(-0.5,-0.5)" points="763.2,97.0 776.0,89.4 788.0,97.0"/>
<use href="#k4" x="1" y="0"/><use href="#k4" x="0" y="1"/><use href="#k4" x="1" y="1"/>
</g>
</svg></body></html>
